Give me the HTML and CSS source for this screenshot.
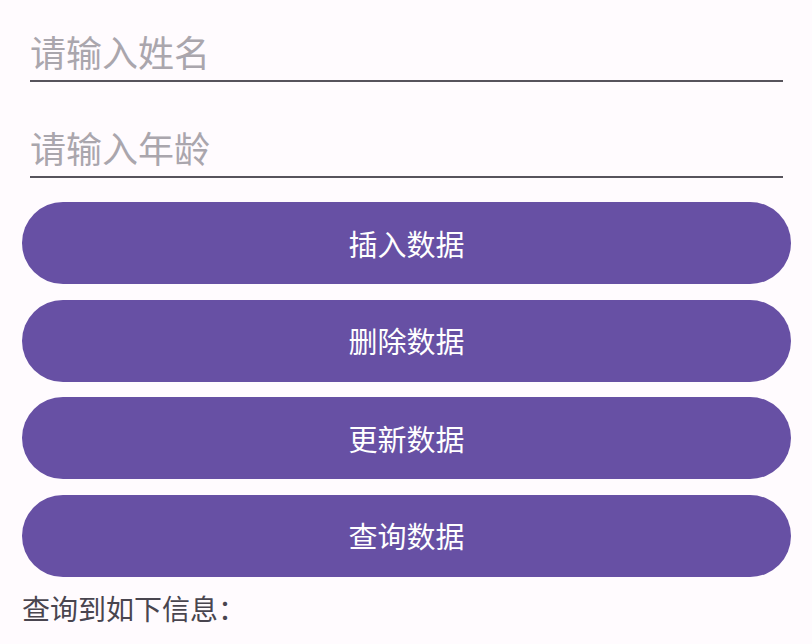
FILE: index.html
```html
<!DOCTYPE html>
<html lang="zh-CN">
<head>
<meta charset="utf-8">
<title>数据库操作</title>
<link rel="stylesheet" href="styles.css">
</head>
<body>
<main class="screen">
  <div class="field field-first"><span class="hint">请输入姓名</span></div>
  <div class="field field-second"><span class="hint">请输入年龄</span></div>
  <div class="buttons">
    <button class="btn">插入数据</button>
    <button class="btn">删除数据</button>
    <button class="btn">更新数据</button>
    <button class="btn">查询数据</button>
  </div>
  <p class="result">查询到如下信息：</p>
</main>
</body>
</html>
```
FILE: styles.css
```css
html, body {
  margin: 0;
  padding: 0;
  background: #fffbfe;
}
body {
  font-family: "Noto Sans CJK SC", "Noto Sans", sans-serif;
  width: 812px;
  height: 644px;
  overflow: hidden;
}
.screen {
  display: flex;
  flex-direction: column;
}
.field {
  margin: 0 29px 0 30px;
  border-bottom: 2px solid #57535c;
  padding-bottom: 11px;
  font-size: 36px;
  line-height: 36px;
}
.field-first {
  padding-top: 33px;
}
.field-second {
  padding-top: 47px;
}
.hint {
  color: #aaa6ad;
}
.buttons {
  display: flex;
  flex-direction: column;
  gap: 15.5px;
  margin: 24px 21px 0 22px;
}
.btn {
  height: 82px;
  border: none;
  border-radius: 41px;
  background: #6750a4;
  color: #ffffff;
  font-family: "Noto Sans CJK SC", "Noto Sans", sans-serif;
  font-size: 29px;
  line-height: 29px;
  padding: 0;
}
.result {
  margin: 17px 0 0 22px;
  font-size: 28px;
  line-height: 28px;
  color: #49454f;
}
```
